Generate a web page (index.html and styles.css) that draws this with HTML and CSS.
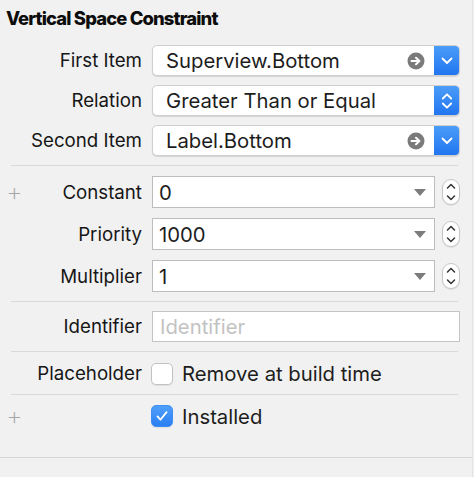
FILE: index.html
```html
<!DOCTYPE html>
<html>
<head>
<meta charset="utf-8">
<link rel="stylesheet" href="styles.css">
</head>
<body>
<div class="panel">
  <h1 class="title">Vertical Space Constraint</h1>

  <div class="group group-popups">
    <div class="row">
      <span class="label">First Item</span>
      <div class="popup">
        <span class="popup-text">Superview.Bottom</span>
        <svg class="goto" viewBox="0 0 18 18" width="18" height="18"><circle cx="9" cy="9" r="8.5" fill="#7b7b7b"/><path d="M4.5 9h7.5M9 5.8l3.4 3.2L9 12.2" stroke="#fff" stroke-width="2" fill="none" stroke-linecap="round" stroke-linejoin="round"/></svg>
        <span class="popup-btn"><svg viewBox="0 0 12 8" width="12" height="8"><path d="M1.5 1.5L6 6l4.5-4.5" stroke="#fff" stroke-width="1.8" fill="none" stroke-linecap="round" stroke-linejoin="round"/></svg></span>
      </div>
    </div>
    <div class="row">
      <span class="label">Relation</span>
      <div class="popup">
        <span class="popup-text">Greater Than or Equal</span>
        <span class="popup-btn"><svg viewBox="0 0 12 20" width="12" height="20"><path d="M1.8 7.5L6 3.3l4.2 4.2M1.8 12.5L6 16.7l4.2-4.2" stroke="#fff" stroke-width="1.8" fill="none" stroke-linecap="round" stroke-linejoin="round"/></svg></span>
      </div>
    </div>
    <div class="row">
      <span class="label">Second Item</span>
      <div class="popup">
        <span class="popup-text">Label.Bottom</span>
        <svg class="goto" viewBox="0 0 18 18" width="18" height="18"><circle cx="9" cy="9" r="8.5" fill="#7b7b7b"/><path d="M4.5 9h7.5M9 5.8l3.4 3.2L9 12.2" stroke="#fff" stroke-width="2" fill="none" stroke-linecap="round" stroke-linejoin="round"/></svg>
        <span class="popup-btn"><svg viewBox="0 0 12 8" width="12" height="8"><path d="M1.5 1.5L6 6l4.5-4.5" stroke="#fff" stroke-width="1.8" fill="none" stroke-linecap="round" stroke-linejoin="round"/></svg></span>
      </div>
    </div>
  </div>

  <div class="sep"></div>

  <div class="group group-fields">
    <div class="row">
      <span class="label with-plus"><span class="plus">+</span><span>Constant</span></span>
      <div class="combo-wrap">
        <div class="combo"><span class="combo-text">0</span><span class="tri"></span></div>
        <div class="stepper"><svg viewBox="0 0 18 26" width="18" height="26"><path d="M5.5 9L9 5.5 12.5 9M5.5 17L9 20.5 12.5 17" stroke="#333" stroke-width="1.5" fill="none" stroke-linecap="round" stroke-linejoin="round"/></svg></div>
      </div>
    </div>
    <div class="row">
      <span class="label">Priority</span>
      <div class="combo-wrap">
        <div class="combo"><span class="combo-text">1000</span><span class="tri"></span></div>
        <div class="stepper"><svg viewBox="0 0 18 26" width="18" height="26"><path d="M5.5 9L9 5.5 12.5 9M5.5 17L9 20.5 12.5 17" stroke="#333" stroke-width="1.5" fill="none" stroke-linecap="round" stroke-linejoin="round"/></svg></div>
      </div>
    </div>
    <div class="row">
      <span class="label">Multiplier</span>
      <div class="combo-wrap">
        <div class="combo"><span class="combo-text">1</span><span class="tri"></span></div>
        <div class="stepper"><svg viewBox="0 0 18 26" width="18" height="26"><path d="M5.5 9L9 5.5 12.5 9M5.5 17L9 20.5 12.5 17" stroke="#333" stroke-width="1.5" fill="none" stroke-linecap="round" stroke-linejoin="round"/></svg></div>
      </div>
    </div>
  </div>

  <div class="sep"></div>

  <div class="group group-ident">
    <div class="row">
      <span class="label">Identifier</span>
      <div class="textfield"><span class="placeholder">Identifier</span></div>
    </div>
  </div>

  <div class="sep"></div>

  <div class="group group-check">
    <div class="row">
      <span class="label">Placeholder</span>
      <label class="check"><span class="box"></span><span class="check-text">Remove at build time</span></label>
    </div>
  </div>

  <div class="sep"></div>

  <div class="group group-check">
    <div class="row">
      <span class="label with-plus"><span class="plus">+</span><span></span></span>
      <label class="check"><span class="box checked"><svg viewBox="0 0 22 22" width="22" height="22"><path d="M6 11.5l3.3 3.6L16 6.8" stroke="#fff" stroke-width="2" fill="none" stroke-linecap="round" stroke-linejoin="round"/></svg></span><span class="check-text">Installed</span></label>
    </div>
  </div>

  <div class="bottom-line"></div>
</div>
</body>
</html>
```

FILE: styles.css
```css
* { box-sizing: border-box; }
html, body {
  margin: 0;
  padding: 0;
  background: #f1f1f1;
}
body {
  font-family: Inter, "Noto Sans", "Liberation Sans", sans-serif;
  font-size: 18.7px;
  color: #161616;
  width: 474px;
  height: 477px;
  overflow: hidden;
}
.panel {
  display: flex;
  flex-direction: column;
  height: 477px;
  border-right: 1px solid #e4e4e4;
  width: 473px;
}
.title {
  margin: 0;
  padding: 7px 0 0 6px;
  height: 45px;
  font-size: 18.4px;
  font-weight: 800;
  line-height: 22px;
  letter-spacing: -0.85px;
  color: #0d0d0d;
}
.group {
  display: flex;
  flex-direction: column;
}
.group-popups { gap: 9px; }
.group-fields { gap: 10px; margin-top: 10px; }
.group-ident { margin-top: 9px; }
.group-check { margin-top: 10px; }
.row {
  display: grid;
  grid-template-columns: 142px 1fr;
  column-gap: 10px;
  align-items: center;
  padding-right: 12px;
}
.label {
  text-align: right;
  white-space: nowrap;
}
.label.with-plus {
  display: flex;
  justify-content: space-between;
  align-items: center;
  padding-left: 6px;
}
.plus {
  color: #a6a6a6;
  font-weight: 200;
  font-size: 26px;
  line-height: 20px;
}
.sep {
  height: 1px;
  background: #d9d9d9;
  margin: 9px 14px 0 11px;
}
.popup {
  height: 31px;
  background: #fff;
  border: 1px solid #cfcfcf;
  border-radius: 5px;
  box-shadow: 0 1px 1px rgba(0,0,0,0.12);
  display: flex;
  align-items: center;
  overflow: hidden;
  font-size: 20.3px;
}
.popup-text {
  flex: 1;
  padding-left: 13px;
  white-space: nowrap;
  color: #1d1d1d;
}
.goto {
  margin-right: 9px;
  flex: none;
}
.popup-btn {
  flex: none;
  width: 26px;
  align-self: stretch;
  margin: -1px -1px -1px 0;
  background: linear-gradient(#4d9ef8, #1f74f0);
  display: flex;
  align-items: center;
  justify-content: center;
}
.combo-wrap {
  display: flex;
  align-items: center;
  gap: 7px;
}
.combo {
  flex: 1;
  height: 32px;
  background: #fff;
  border: 1px solid #bdbdbd;
  display: flex;
  align-items: center;
  padding-left: 6px;
  padding-right: 8px;
  font-size: 20.3px;
}
.combo-text { flex: 1; color: #1d1d1d; }
.tri {
  width: 0;
  height: 0;
  border-left: 6px solid transparent;
  border-right: 6px solid transparent;
  border-top: 7px solid #7c7c7c;
}
.stepper {
  width: 18px;
  height: 26px;
  border: 1px solid #c6c6c6;
  border-radius: 9px;
  background: #fff;
  display: flex;
  align-items: center;
  justify-content: center;
  box-shadow: 0 1px 1px rgba(0,0,0,0.08);
}
.stepper svg { flex: none; }
.textfield {
  height: 31px;
  background: #fff;
  border: 1px solid #c4c4c4;
  display: flex;
  align-items: center;
  padding-left: 7px;
  font-size: 20.3px;
}
.placeholder { color: #c2c2c2; }
.check {
  display: flex;
  align-items: center;
  gap: 9px;
  height: 22px;
  margin-left: -1px;
  font-size: 20.3px;
}
.box {
  width: 22px;
  height: 22px;
  border: 1px solid #c2c2c2;
  border-radius: 5px;
  background: #fff;
  box-shadow: 0 1px 1px rgba(0,0,0,0.08);
  display: flex;
  align-items: center;
  justify-content: center;
}
.box.checked {
  border-color: #3d8ef5;
  background: linear-gradient(#4f9ffa, #2a7ff2);
}
.check-text { color: #1d1d1d; white-space: nowrap; }
.bottom-line {
  height: 1px;
  background: #d6d6d6;
  margin-top: 30px;
}
```
